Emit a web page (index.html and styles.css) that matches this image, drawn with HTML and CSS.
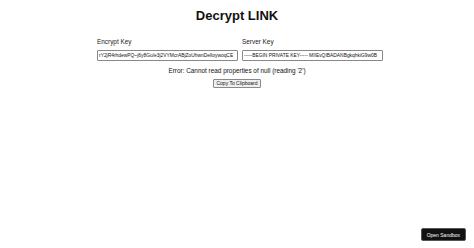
FILE: index.html
```html
<!DOCTYPE html>
<html>
<head>
<meta charset="utf-8">
<link rel="stylesheet" href="styles.css">
</head>
<body>
<div class="app">
  <h1 class="title">Decrypt LINK</h1>
  <div class="fields">
    <div class="field">
      <label class="label">Encrypt Key</label>
      <input class="input" type="text" value="rY2jR4rhdewPQ~j6y8Gu/e3j2VYMcrABjZoUhwnDelloywoqCE">
    </div>
    <div class="field">
      <label class="label">Server Key</label>
      <input class="input" type="text" value="-----BEGIN PRIVATE KEY----- MIIEvQIBADANBgkqhkiG9w0B">
    </div>
  </div>
  <p class="error">Error: Cannot read properties of null (reading '2')</p>
  <button class="copy">Copy To Clipboard</button>
</div>
<button class="sandbox">Open Sandbox</button>
</body>
</html>
```
FILE: styles.css
```css
html, body {
  margin: 0;
  padding: 0;
  background: #ffffff;
  font-family: "Liberation Sans", Arial, sans-serif;
  color: #111;
}
.app {
  display: flex;
  flex-direction: column;
  align-items: center;
}
.title {
  font-size: 13px;
  font-weight: bold;
  margin: 7px 0 0 0;
  line-height: 18px;
}
.fields {
  display: flex;
  gap: 4px;
  margin-top: 13px;
  margin-left: 6px;
}
.field {
  display: flex;
  flex-direction: column;
  gap: 4px;
}
.label {
  font-size: 6.4px;
  line-height: 8px;
  color: #222;
}
.input {
  width: 137px;
  height: 9px;
  padding: 0 1px;
  margin: 0;
  border: 1px solid #888;
  border-radius: 1px;
  font-family: "Liberation Sans", Arial, sans-serif;
  font-size: 4.9px;
  color: #111;
  outline: none;
}
.error {
  font-size: 6.4px;
  line-height: 8px;
  margin: 6px 0 0 0;
  color: #111;
}
.copy {
  margin-top: 4px;
  font-family: "Liberation Sans", Arial, sans-serif;
  font-size: 5px;
  line-height: 7px;
  padding: 0 2px;
  height: 9px;
  border: 1px solid #888;
  border-radius: 1px;
  background: #efefef;
  color: #111;
}
.sandbox {
  position: fixed;
  right: 8px;
  bottom: 7px;
  background: #111;
  color: #fff;
  border: 1px solid #555;
  border-radius: 2px;
  font-family: "Liberation Sans", Arial, sans-serif;
  font-size: 5px;
  height: 13px;
  padding: 0 5px;
}
```
